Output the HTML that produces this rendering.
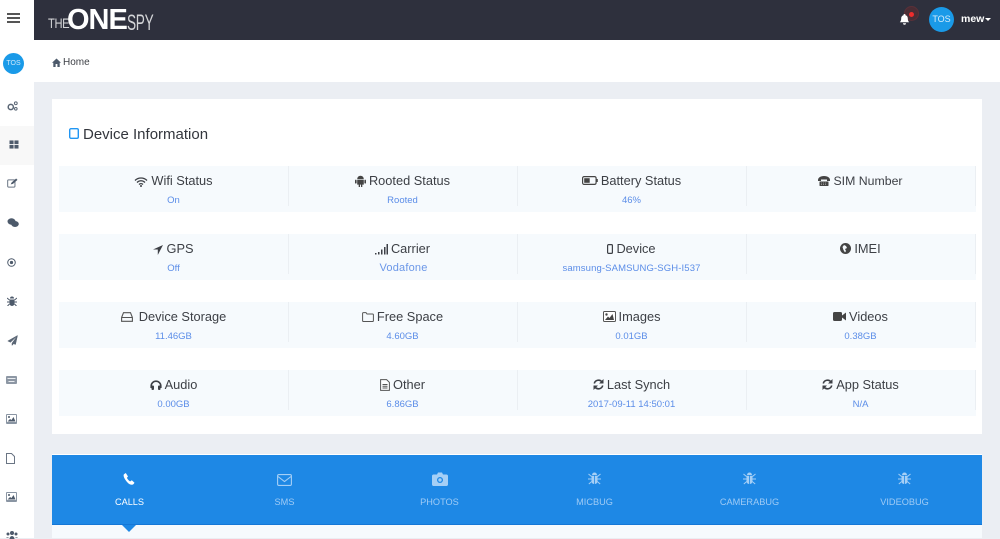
<!DOCTYPE html>
<html><head><meta charset="utf-8">
<style>
html,body{margin:0;padding:0;width:1000px;height:538px;overflow:hidden;background:#ebeef3;font-family:"Liberation Sans",sans-serif}
.a{position:absolute}
.a svg{display:block}
.band{position:absolute;left:59px;width:917px;height:46px;background:#f6fafd}
.div{position:absolute;top:0;width:1px;height:40px;background:#ebeff3}
.l{position:absolute;width:229px;text-align:center;font-size:12.8px;line-height:16px;color:#3d4046;white-space:nowrap}
.l svg{display:inline-block;vertical-align:-2px;margin-right:3px}
.v{position:absolute;width:229px;text-align:center;font-size:9.5px;line-height:12px;color:#5b8de8;white-space:nowrap}
.s{position:absolute;left:7px;fill:#4d5a6b;stroke:none}
.t{position:absolute;width:155px;text-align:center;top:496px;font-size:9.2px;line-height:12px;color:#9fcbf5}
.ti{position:absolute;fill:#a5cff6}
</style></head><body>
<div class="a" style="left:0;top:0;width:34px;height:538px;background:#fff"></div>
<div class="a" style="left:0;top:126px;width:34px;height:39px;background:#f8f8f8"></div>
<div class="a" style="left:7px;top:13px;width:13px;height:2px;background:#555;box-shadow:0 4px 0 #555,0 8px 0 #555"></div>
<div class="a" style="left:3px;top:53px;width:21px;height:21px;border-radius:50%;background:#1a9ae8;color:#cfe9fb;font-size:7px;line-height:21px;text-align:center">TOS</div>

<svg class="s" style="top:101px" width="11" height="10" viewBox="0 0 11 10"><circle cx="3.800" cy="6" r="2.600" fill="none" stroke="#5a6675" stroke-width="1.500"/><circle cx="8.800" cy="2.300" r="1.400" fill="none" stroke="#5a6675" stroke-width="1"/><circle cx="8.800" cy="7.800" r="1.300" fill="none" stroke="#5a6675" stroke-width="1"/></svg>
<svg class="s" style="top:140px;left:9px" width="10" height="9" viewBox="0 0 11 10"><rect x="0.500" y="0.500" width="4.500" height="4"/><rect x="6" y="0.500" width="4.500" height="4"/><rect x="0.500" y="5.500" width="4.500" height="4"/><rect x="6" y="5.500" width="4.500" height="4"/></svg>
<svg class="s" style="top:178px" width="11" height="10" viewBox="0 0 12 11"><rect x="0.700" y="2" width="8" height="8" rx="1" fill="none" stroke="#6a7584" stroke-width="1.100"/><path d="M4 7l1-2 5-4.500 1.500 1.500-5 4.500z" fill="#4d5a6b"/></svg>
<svg class="s" style="top:218px" width="12" height="10" viewBox="0 0 12 10"><ellipse cx="4.500" cy="3.500" rx="4" ry="3.200"/><ellipse cx="8" cy="6" rx="3.800" ry="3"/></svg>
<svg class="s" style="top:258px" width="9" height="9" viewBox="0 0 10 10"><circle cx="5" cy="5" r="4.200" fill="none" stroke="#4d5a6b" stroke-width="1.100"/><circle cx="5" cy="5" r="1.800"/></svg>
<svg class="s" style="top:296px" width="10" height="10" viewBox="0 0 10 10"><path d="M3 2.500a2 2 0 0 1 4 0zM2.500 3.500h5v4a2.500 2.500 0 0 1-5 0z"/><path d="M0 2l2.500 2M10 2L7.500 4M0 6h2.500M10 6H7.500M0.500 10l2-2M9.500 10l-2-2" stroke="#4d5a6b" fill="none"/></svg>
<svg class="s" style="top:335px" width="11" height="11" viewBox="0 0 11 11"><path d="M10.500.5L.8 6l2.700 1.300L10.500.5 5 8.200V10.500l1.700-1.800 1.800.8z" fill="#5a6675" stroke="#5a6675" stroke-width=".5"/></svg>
<svg class="s" style="top:376px;left:6px" width="11" height="8" viewBox="0 0 11 8"><rect width="11" height="8" rx="1" fill="#8d97a4"/><rect x="1.500" y="2" width="8" height="1" fill="#e8ebef"/><rect x="2.500" y="5" width="6" height="1" fill="#e8ebef"/></svg>
<svg class="s" style="top:414px;left:6px" width="11" height="10" viewBox="0 0 11 10"><rect width="11" height="10" rx="1" fill="#8a95a3"/><rect x="1" y="1" width="9" height="7" fill="#fff"/><path d="M1.500 7.500l2.500-2.500 1.500 1 2-3 2 4.500z"/><circle cx="3" cy="3" r="1"/></svg>
<svg class="s" style="top:453px;left:6px" width="9" height="11" viewBox="0 0 9 11"><path d="M.5.500h5l3 3v7h-8z" fill="none" stroke="#6a7584" stroke-width="1"/></svg>
<svg class="s" style="top:492px;left:6px" width="11" height="10" viewBox="0 0 11 10"><rect width="11" height="10" rx="1" fill="#8a95a3"/><rect x="1" y="1" width="9" height="7" fill="#fff"/><path d="M1.500 7.500l2.500-2.500 1.500 1 2-3 2 4.500z"/><circle cx="3" cy="3" r="1"/></svg>
<svg class="s" style="top:531px;left:6px" width="12" height="8" viewBox="0 0 12 8"><circle cx="6" cy="2" r="2"/><circle cx="2" cy="3" r="1.500"/><circle cx="10" cy="3" r="1.500"/><path d="M3.500 8a2.500 3 0 0 1 5 0zM0 7a2 2 0 0 1 3 0zM9 7a2 2 0 0 1 3 0z"/></svg>

<div class="a" style="left:34px;top:0;width:966px;height:40px;background:#2e303d"></div>
<div class="a" style="left:48px;top:15px;color:#d4d5d8;font-size:14px;line-height:16px;letter-spacing:-.5px;transform:scaleX(.8);transform-origin:0 0">THE</div>
<div class="a" style="left:67px;top:6px;color:#fff;font-size:29px;line-height:28px;font-weight:bold;letter-spacing:-1px">ONE</div>
<div class="a" style="left:127px;top:12px;color:#d4d5d8;font-size:22px;line-height:22px;letter-spacing:-.5px;transform:scaleX(.62);transform-origin:0 0">SPY</div>

<div class="a" style="left:904px;top:6px;width:13px;height:13px;border-radius:50%;background:#4a2d35;border:1px solid #5a3038"></div>
<div class="a" style="left:909px;top:12px;width:5px;height:5px;border-radius:50%;background:#ee2d2d"></div>
<svg class="a" style="left:899px;top:14px" width="11" height="11" viewBox="0 0 11 11"><path d="M5.500 0a1 1 0 0 1 1 1.200c1.800.4 2.300 2 2.300 3.300 0 2 .6 2.800 1.400 3.800H.8c.8-1 1.400-1.800 1.400-3.800 0-1.300.5-2.900 2.300-3.300A1 1 0 0 1 5.500 0zM4 9.200h3a1.500 1.500 0 0 1-3 0z" fill="#fff"/></svg>
<div class="a" style="left:929px;top:7px;width:25px;height:25px;border-radius:50%;background:#1a9ae8;color:#d5ecfb;font-size:9px;line-height:25px;text-align:center">TOS</div>
<div class="a" style="left:961px;top:13px;color:#fff;font-size:10.500px;line-height:13px;font-weight:bold">mew</div>
<div class="a" style="left:985px;top:18px;width:0;height:0;border:3px solid transparent;border-top-color:#fff"></div>

<div class="a" style="left:34px;top:40px;width:966px;height:42px;background:#fff"></div>
<svg class="a" style="left:52px;top:58px" width="9" height="9" viewBox="0 0 9 9"><path d="M4.500.5L9 4.700H7.700V9H5.400V6H3.600v3H1.300V4.700H0z" fill="#4d5a6b"/></svg>
<div class="a" style="left:63px;top:56px;color:#3d4046;font-size:10px;line-height:14px">Home</div>

<div class="a" style="left:52px;top:99px;width:930px;height:335px;background:#fff"></div>
<svg class="a" style="left:69px;top:128px" width="10" height="11" viewBox="0 0 10 11"><rect x=".7" y=".7" width="8.600" height="9.600" rx="1.300" fill="none" stroke="#2196f3" stroke-width="1.400"/></svg>
<div class="a" style="left:83px;top:126px;color:#33363d;font-size:15px;line-height:18px">Device Information</div>

<div class="band" style="top:166px"><i class="div" style="left:229px"></i><i class="div" style="left:458px"></i><i class="div" style="left:687px"></i><i class="div" style="left:916px"></i></div>
<div class="band" style="top:234px"><i class="div" style="left:229px"></i><i class="div" style="left:458px"></i><i class="div" style="left:687px"></i><i class="div" style="left:916px"></i></div>
<div class="band" style="top:302px"><i class="div" style="left:229px"></i><i class="div" style="left:458px"></i><i class="div" style="left:687px"></i><i class="div" style="left:916px"></i></div>
<div class="band" style="top:370px"><i class="div" style="left:229px"></i><i class="div" style="left:458px"></i><i class="div" style="left:687px"></i><i class="div" style="left:916px"></i></div>

<!-- Row 1 -->
<div class="l" style="left:59px;top:173px"><svg width="14" height="10" viewBox="0 0 14 10"><path d="M1 3.500a8.500 8.500 0 0 1 12 0M3 5.500a5.500 5.500 0 0 1 8 0M5 7.500a2.800 2.800 0 0 1 4 0" fill="none" stroke="#3d4046" stroke-width="1.300"/><circle cx="7" cy="9" r="1" fill="#3d4046"/></svg>Wifi Status</div>
<div class="v" style="left:59px;top:195px">On</div>
<div class="l" style="left:288px;top:173px"><svg width="11" height="12" viewBox="0 0 11 12"><path d="M2.200 4a3.300 3.300 0 0 1 6.600 0zM2.200 4.600h6.600v5H7.300V12H6V9.600H5V12H3.700V9.600H2.200z" fill="#444"/><rect y="4.600" width="1.600" height="4" rx=".8" fill="#444"/><rect x="9.400" y="4.600" width="1.600" height="4" rx=".8" fill="#444"/></svg>Rooted Status</div>
<div class="v" style="left:288px;top:195px">Rooted</div>
<div class="l" style="left:517px;top:173px"><svg width="16" height="9" viewBox="0 0 16 9" style="vertical-align:0"><rect x=".6" y=".6" width="13.500" height="7.800" rx="1.500" fill="none" stroke="#444" stroke-width="1.200"/><rect x="2.200" y="2.200" width="5.500" height="4.600" fill="#444"/><rect x="14.500" y="3" width="1.300" height="3" fill="#444"/></svg>Battery Status</div>
<div class="v" style="left:517px;top:195px">46%</div>
<div class="l" style="left:746px;top:173px;font-size:12.3px"><svg width="12" height="10" viewBox="0 0 12 10" style="vertical-align:-1px"><path d="M0 4c0-2 2-4 6-4s6 2 6 4v1H9V3.500H3V5H0z" fill="#444"/><rect x="1.500" y="5.500" width="9" height="4.500" rx=".5" fill="#444"/><path d="M3 7h6M3 8.500h6" stroke="#ddd" stroke-width=".6" stroke-dasharray="1 1"/></svg>SIM Number</div>

<!-- Row 2 -->
<div class="l" style="left:59px;top:241px"><svg width="10" height="10" viewBox="0 0 10 10"><path d="M10 0L0 4.500h4.800V10z" fill="#3d4046"/></svg>GPS</div>
<div class="v" style="left:59px;top:263px">Off</div>
<div class="l" style="left:288px;top:241px"><svg width="13" height="11" viewBox="0 0 13 11"><path d="M0 9h1.500v1.500H0zM3 8h1.500v2.500H3zM6 5.500h1.500v5H6zM9 3h1.500v7.500H9zM11.500 0H13v10.500h-1.500z" fill="#3d4046"/></svg>Carrier</div>
<div class="v" style="left:289px;top:262px;font-size:11px;letter-spacing:.2px;color:#6b97e8">Vodafone</div>
<div class="l" style="left:517px;top:241px"><svg width="6" height="10" viewBox="0 0 6 10" style="vertical-align:-1px"><rect x=".6" y=".6" width="4.800" height="8.800" rx="1" fill="none" stroke="#3d4046" stroke-width="1.200"/></svg>Device</div>
<div class="v" style="left:517px;top:263px;letter-spacing:.12px">samsung-SAMSUNG-SGH-I537</div>
<div class="l" style="left:746px;top:241px"><svg width="11" height="11" viewBox="0 0 11 11" style="vertical-align:-1px"><circle cx="5.500" cy="5.500" r="5.500" fill="#444"/><path d="M4 2l2 1 1 2-2 1 1 2-1 1.500L3.500 7 2.500 4z" fill="#f6fafd"/></svg>IMEI</div>

<!-- Row 3 -->
<div class="l" style="left:59px;top:309px"><svg width="12" height="10" viewBox="0 0 12 10" style="margin-right:6px;vertical-align:-1px"><path d="M2.500.700h7L11.400 5.500v3.800H.6V5.500zM1 5.500h10" fill="none" stroke="#555" stroke-width="1.100"/></svg>Device Storage</div>
<div class="v" style="left:59px;top:331px">11.46GB</div>
<div class="l" style="left:288px;top:309px"><svg width="12" height="10" viewBox="0 0 12 10" style="vertical-align:-1px"><path d="M.6 2V1.500c0-.5.4-.9.900-.9h2.500l1 1.400h5.500c.5 0 .9.400.9.900v5.700c0 .5-.4.9-.9.900H1.500c-.5 0-.9-.4-.9-.9z" fill="none" stroke="#555" stroke-width="1"/></svg>Free Space</div>
<div class="v" style="left:288px;top:331px">4.60GB</div>
<div class="l" style="left:517px;top:309px"><svg width="13" height="11" viewBox="0 0 13 11" style="vertical-align:-1px"><rect x=".5" y=".5" width="12" height="10" rx="1" fill="#fff" stroke="#555"/><path d="M2 9l3-3.500 1.500 1.500 3-4L11 9z" fill="#444"/><circle cx="3.500" cy="3.500" r="1.200" fill="#444"/></svg>Images</div>
<div class="v" style="left:517px;top:331px">0.01GB</div>
<div class="l" style="left:746px;top:309px"><svg width="13" height="9" viewBox="0 0 13 9" style="vertical-align:0"><rect width="9" height="9" rx="1.500" fill="#444"/><path d="M9 3.500L13 .5v8L9 5.500z" fill="#444"/></svg>Videos</div>
<div class="v" style="left:746px;top:331px">0.38GB</div>

<!-- Row 4 -->
<div class="l" style="left:59px;top:377px"><svg width="12" height="10" viewBox="0 0 12 10" style="vertical-align:-1px"><path d="M1.200 8V6a4.800 4.800 0 0 1 9.600 0v2" fill="none" stroke="#3d4046" stroke-width="1.600"/><rect x="1.500" y="5.500" width="2.500" height="4.500" rx="1" fill="#3d4046"/><rect x="8" y="5.500" width="2.500" height="4.500" rx="1" fill="#3d4046"/></svg>Audio</div>
<div class="v" style="left:59px;top:399px">0.00GB</div>
<div class="l" style="left:288px;top:377px"><svg width="10" height="12" viewBox="0 0 10 12"><path d="M.6.600h6L9.400 3.400v8H.6z" fill="#fff" stroke="#555" stroke-width="1"/><path d="M2.500 5.500h5M2.500 7.200h5M2.500 9h5" stroke="#555"/></svg>Other</div>
<div class="v" style="left:288px;top:399px">6.86GB</div>
<div class="l" style="left:517px;top:377px"><svg width="11" height="11" viewBox="0 0 11 11" style="vertical-align:-1px"><path d="M1.300 4.500A4.300 4.300 0 0 1 9 3M9.700 6.500A4.300 4.300 0 0 1 2 8" fill="none" stroke="#3d4046" stroke-width="1.600"/><path d="M10.500 0v4.500H6zM.5 11V6.500H5z" fill="#3d4046"/></svg>Last Synch</div>
<div class="v" style="left:517px;top:399px">2017-09-11 14:50:01</div>
<div class="l" style="left:746px;top:377px"><svg width="11" height="11" viewBox="0 0 11 11" style="vertical-align:-1px"><path d="M1.300 4.500A4.300 4.300 0 0 1 9 3M9.700 6.500A4.300 4.300 0 0 1 2 8" fill="none" stroke="#3d4046" stroke-width="1.600"/><path d="M10.500 0v4.500H6zM.5 11V6.500H5z" fill="#3d4046"/></svg>App Status</div>
<div class="v" style="left:746px;top:399px">N/A</div>

<!-- Tabs -->
<div class="a" style="left:52px;top:525px;width:930px;height:13px;background:#f6fafd"></div>
<div class="a" style="left:52px;top:454px;width:930px;height:1px;background:#fff"></div>
<div class="a" style="left:52px;top:455px;width:930px;height:70px;background:#1e88e5;border-bottom:1px solid #1577d6;box-sizing:border-box"></div>
<div class="a" style="left:122px;top:525px;width:0;height:0;border:7px solid transparent;border-top-color:#1e88e5;border-bottom:0"></div>

<svg class="a" style="left:123px;top:473px" width="12" height="12" viewBox="0 0 12 12"><path d="M2.800 0L1 1.200C.2 2 .5 4 2.500 7s4.300 4.800 6.500 4.800c.8 0 1.500-.5 2.500-2L8.800 7.300 7.300 8.400C6 8 4.300 6 3.900 4.700L5 3.500z" fill="#fff"/></svg>
<svg class="ti" style="left:277px;top:474px" width="15" height="12" viewBox="0 0 15 12"><rect x=".6" y=".6" width="13.800" height="10.800" rx="1.300" fill="none" stroke="#a5cff6" stroke-width="1.100"/><path d="M1 2.500l6.500 5 6.500-5" fill="none" stroke="#a5cff6" stroke-width="1.100"/></svg>
<svg class="ti" style="left:432px;top:472px" width="16" height="14" viewBox="0 0 16 14"><path d="M1.500 2.500H5L6 .5h4l1 2h3.500c.8 0 1.500.7 1.500 1.500v8.500c0 .8-.7 1.500-1.500 1.500h-13C.7 14 0 13.300 0 12.500V4c0-.8.700-1.500 1.500-1.500z"/><circle cx="8" cy="8" r="3" fill="#1e88e5"/><circle cx="8" cy="8" r="1.700"/></svg>
<svg class="ti" style="left:588px;top:472px" width="13" height="13" viewBox="0 0 13 13"><path d="M4 3a2.500 2.500 0 0 1 5 0z"/><path d="M3.500 3.800h2.600V12C4.500 12 3.500 10.500 3.500 9zM6.900 3.800h2.600V9c0 1.500-1 3-2.600 3z"/><path d="M.5 2l3 2.500M12.500 2l-3 2.500M0 7h3.500M13 7H9.500M.8 12l3-2.500M12.200 12l-3-2.500" stroke="#a5cff6" fill="none"/></svg>
<svg class="ti" style="left:743px;top:472px" width="13" height="13" viewBox="0 0 13 13"><path d="M4 3a2.500 2.500 0 0 1 5 0z"/><path d="M3.500 3.800h2.600V12C4.500 12 3.500 10.500 3.500 9zM6.900 3.800h2.600V9c0 1.500-1 3-2.600 3z"/><path d="M.5 2l3 2.500M12.500 2l-3 2.500M0 7h3.500M13 7H9.500M.8 12l3-2.500M12.200 12l-3-2.500" stroke="#a5cff6" fill="none"/></svg>
<svg class="ti" style="left:898px;top:472px" width="13" height="13" viewBox="0 0 13 13"><path d="M4 3a2.500 2.500 0 0 1 5 0z"/><path d="M3.500 3.800h2.600V12C4.500 12 3.500 10.500 3.500 9zM6.900 3.800h2.600V9c0 1.500-1 3-2.600 3z"/><path d="M.5 2l3 2.500M12.500 2l-3 2.500M0 7h3.500M13 7H9.500M.8 12l3-2.500M12.200 12l-3-2.500" stroke="#a5cff6" fill="none"/></svg>

<div class="t" style="left:52px;color:#fff">CALLS</div>
<div class="t" style="left:207px">SMS</div>
<div class="t" style="left:362px">PHOTOS</div>
<div class="t" style="left:517px">MICBUG</div>
<div class="t" style="left:672px">CAMERABUG</div>
<div class="t" style="left:827px">VIDEOBUG</div>
</body></html>
